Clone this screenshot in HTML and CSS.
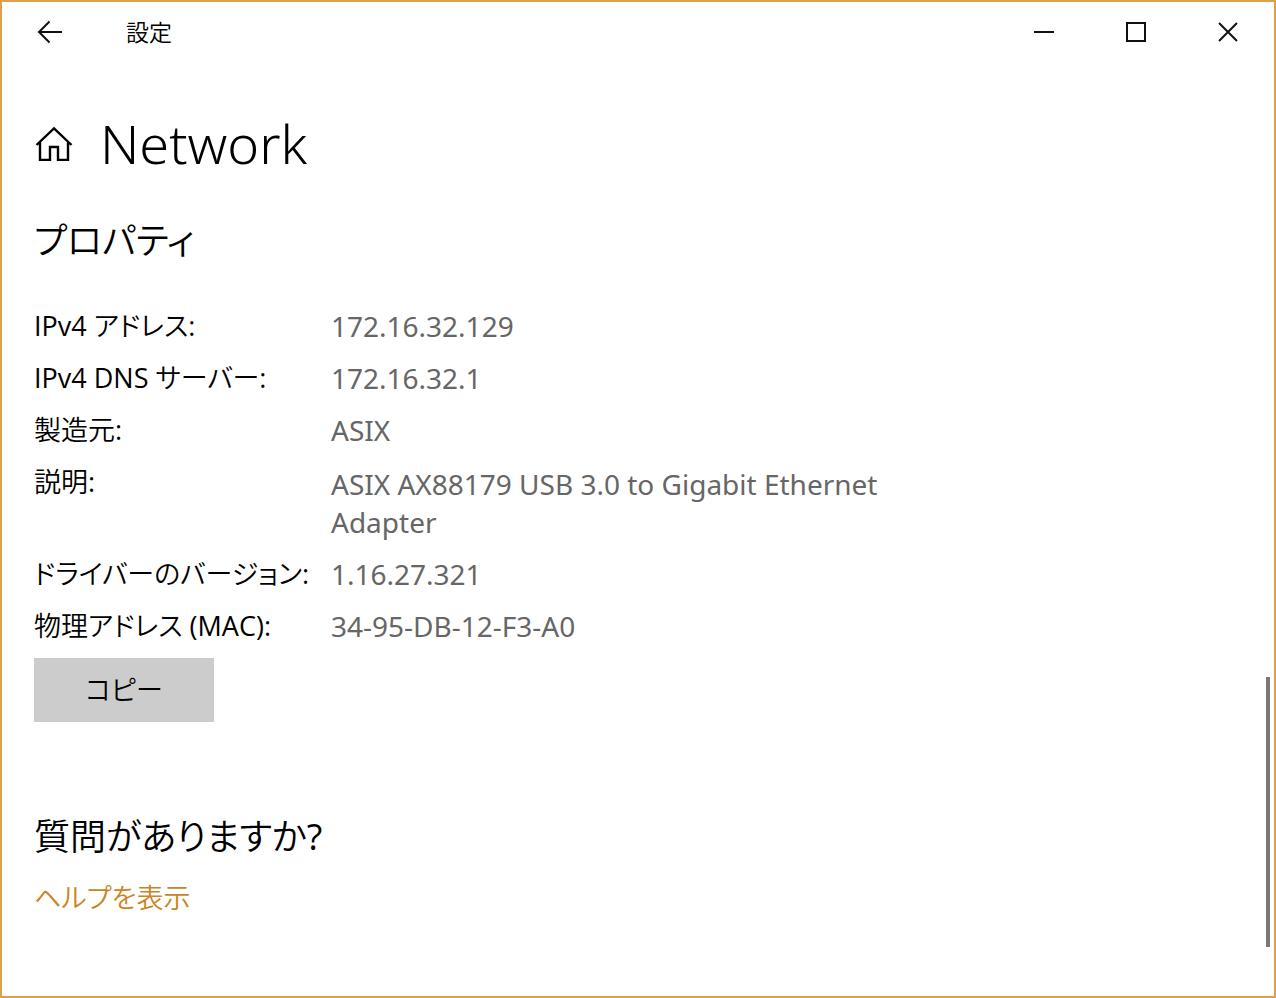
FILE: index.html
```
<!DOCTYPE html>
<html lang="ja">
<head>
<meta charset="utf-8">
<meta name="viewport" content="width=device-width, initial-scale=1">
<title>設定</title>
<link rel="stylesheet" href="styles.css">
</head>
<body>
<div class="window">
  <header class="titlebar">
    <button class="back-button" type="button" aria-label="戻る">
      <svg width="26" height="24" viewBox="0 0 26 24"><path d="M25 12H2M12.500 1.500L2 12l10.500 10.500"/></svg>
    </button>
    <span class="app-title">設定</span>
    <div class="window-controls">
      <button class="window-button" type="button" aria-label="最小化">
        <svg width="20" height="20" viewBox="0 0 20 20"><path d="M0 10H20"/></svg>
      </button>
      <button class="window-button" type="button" aria-label="最大化">
        <svg width="20" height="20" viewBox="0 0 20 20"><path d="M1 1H19V19H1Z"/></svg>
      </button>
      <button class="window-button" type="button" aria-label="閉じる">
        <svg width="20" height="20" viewBox="0 0 20 20"><path d="M1 1L19 19M19 1L1 19"/></svg>
      </button>
    </div>
  </header>
  <div class="viewport">
    <main class="content">
      <div class="page-header">
        <button class="home-button" type="button" aria-label="ホーム">
          <svg width="40" height="36" viewBox="0 0 40 36"><path d="M2.500 20L20 3.500L37.500 20M6 17.500V35H16V22H24V35H34V17.500"/></svg>
        </button>
        <h1 class="page-title">Network</h1>
      </div>
      <section class="properties">
        <h2 class="section-title">プロパティ</h2>
        <dl class="property-list">
          <dt>IPv4 アドレス:</dt><dd>172.16.32.129</dd>
          <dt>IPv4 DNS サーバー:</dt><dd>172.16.32.1</dd>
          <dt>製造元:</dt><dd>ASIX</dd>
          <dt>説明:</dt><dd class="multiline">ASIX AX88179 USB 3.0 to Gigabit Ethernet Adapter</dd>
          <dt>ドライバーのバージョン:</dt><dd>1.16.27.321</dd>
          <dt>物理アドレス (MAC):</dt><dd>34-95-DB-12-F3-A0</dd>
        </dl>
        <button class="copy-button" type="button">コピー</button>
      </section>
      <section class="help">
        <h2 class="section-title">質問がありますか?</h2>
        <a class="help-link" href="#">ヘルプを表示</a>
      </section>
    </main>
    <div class="scroll-thumb"></div>
  </div>
</div>
</body>
</html>
```
FILE: styles.css
```
* {
  box-sizing: border-box;
}

body {
  margin: 0;
  background: #fff;
  color: #000;
  font-family: "Open Sans", "Noto Sans CJK JP DemiLight", "Noto Sans CJK JP", sans-serif;
  font-size: 27px;
  font-weight: 400;
  line-height: 38px;
  font-feature-settings: "palt";
}

button {
  padding: 0;
  border: 0;
  background: none;
  color: inherit;
  font: inherit;
  font-feature-settings: inherit;
}

svg {
  display: block;
  fill: none;
  stroke: #111;
  stroke-width: 2;
}

.window {
  display: flex;
  flex-direction: column;
  min-height: 100vh;
  border: 2px solid #dfa04a;
}

.titlebar {
  display: flex;
  align-items: center;
  height: 60px;
}

.back-button,
.window-button {
  display: grid;
  place-items: center;
  height: 60px;
}

.back-button {
  width: 96px;
}

.app-title {
  flex: 1;
  padding-left: 28px;
  font-size: 23px;
}

.window-controls {
  display: flex;
}

.window-button {
  width: 92px;
}

.viewport {
  display: flex;
  flex: 1;
}

.content {
  flex: 1;
  padding: 46px 32px 0;
}

.page-header {
  display: flex;
  align-items: center;
  gap: 26px;
}

.home-button svg {
  stroke: #000;
  stroke-width: 2.400;
}

.page-title {
  margin: 0;
  font-family: "Noto Sans", "Open Sans", sans-serif;
  font-size: 54px;
  font-weight: 300;
  line-height: 70px;
}

.section-title {
  margin: 0;
  font-size: 36px;
  font-weight: 400;
  line-height: 52px;
}

.properties {
  padding-top: 37px;
}

.property-list {
  display: grid;
  grid-template-columns: 276px minmax(0, 580px);
  column-gap: 21px;
  row-gap: 14px;
  margin: 40px 0 13px;
}

.property-list dt {
  white-space: nowrap;
}

.property-list dd {
  margin: 0;
  color: #666;
  font-family: "Noto Sans", sans-serif;
  font-size: 28px;
}

.property-list .multiline {
  padding-top: 2px;
}

.copy-button {
  width: 180px;
  height: 64px;
  background: #ccc;
}

.help {
  padding-top: 89px;
}

.help-link {
  display: inline-block;
  margin-top: 16px;
  color: #ca8423;
  text-decoration: none;
}

.scroll-thumb {
  align-self: flex-end;
  width: 4px;
  height: 270px;
  margin: 0 4px 49px 0;
  background: #767978;
}
```
